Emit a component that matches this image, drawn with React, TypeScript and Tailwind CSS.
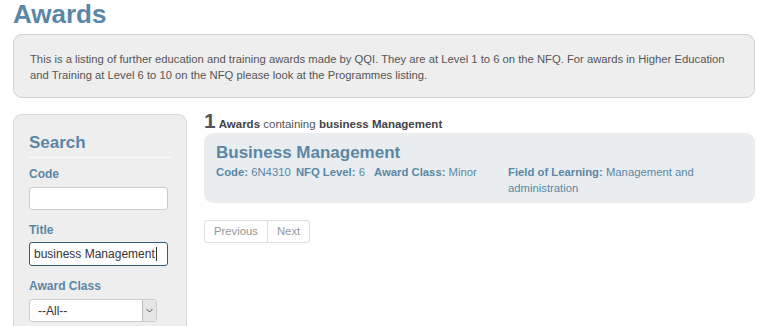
import React from 'react';

const blue = 'text-[#5a87a7]';

export default function App() {
  return (
    <div className="h-[326px] w-[768px] overflow-hidden bg-white px-[13px] font-['Liberation_Sans',Arial,sans-serif] text-[#555]">
      {/* Page title */}
      <h1 className={`text-[26px] font-bold leading-[28px] ${blue}`}>Awards</h1>

      {/* Intro box */}
      <div className="mt-[6px] h-[64px] rounded-[9px] border border-[#d0d0d0] bg-[#eeeeee] px-[16px] pt-[16px] text-[11.25px] leading-[16px] text-[#555]">
        This is a listing of further education and training awards made by QQI. They are at Level 1 to 6 on the NFQ. For awards in Higher Education
        and Training at Level 6 to 10 on the NFQ please look at the Programmes listing.
      </div>

      <div className="mt-[16px] flex gap-[17px]">
        {/* Search sidebar */}
        <aside className="h-[230px] w-[174px] shrink-0 rounded-t-[9px] border border-b-0 border-[#d8d8d8] bg-[#eeeeee] px-[15px] pt-[18px]">
          <h2 className={`pb-[4px] text-[17px] font-bold leading-[20px] ${blue}`}>Search</h2>
          <div className="border-t border-[#fafafa]" />
          <label className={`mt-[9px] block text-[12px] font-bold leading-[14px] ${blue}`}>Code</label>
          <input className="mt-[6px] block h-[23px] w-[139px] rounded-[3px] border border-[#ccc] bg-white" />
          <label className={`mt-[13px] block text-[12px] font-bold leading-[14px] ${blue}`}>Title</label>
          <div className="mt-[5px] flex h-[24px] w-[139px] items-center rounded-[3px] border border-[#2f5e80] bg-white px-[4px] text-[12px] text-[#333]">
            business Management<span className="ml-[1px] h-[14px] w-px bg-[#333]" />
          </div>
          <label className={`mt-[13px] block text-[12px] font-bold leading-[14px] ${blue}`}>Award Class</label>
          <div className="mt-[6px] flex h-[23px] w-[128px] items-center rounded-[3px] border border-[#ccc] bg-white text-[12px] text-[#333]">
            <span className="flex-1 pl-[8px]">--All--</span>
            <span className="flex h-full w-[14px] items-center justify-center border-l border-[#bbb] bg-[#e6e6e6]">
              <svg width="7" height="5" viewBox="0 0 7 5">
                <path d="M0.5 1 L3.5 4 L6.5 1" fill="none" stroke="#555" strokeWidth="1" />
              </svg>
            </span>
          </div>
        </aside>

        {/* Results */}
        <main className="-mt-[3px] flex-1">
          <div className="flex items-baseline gap-[3px] leading-[20px]">
            <span className="text-[21px] font-bold text-[#555]">1</span>
            <span className="text-[11.5px] text-[#444]">
              <b>Awards</b> <span className="text-[#555]">containing</span> <b>business Management</b>
            </span>
          </div>
          <div className="mt-[-1px] h-[70px] rounded-[9px] bg-[#e9edef] px-[12px] pt-[10px]">
            <h3 className={`text-[17px] font-bold leading-[20px] ${blue}`}>Business Management</h3>
            <div className={`mt-[1px] flex text-[11.3px] leading-[16px] ${blue}`}>
              <div className="w-[292px] shrink-0">
                <b>Code:</b> 6N4310 <b className="ml-[2px]">NFQ Level:</b> 6 <b className="ml-[6px]">Award Class:</b> Minor
              </div>
              <div className="w-[200px]">
                <b>Field of Learning:</b> Management and administration
              </div>
            </div>
          </div>

          <div className="mt-[17px] flex h-[23px] w-fit rounded-[3px] border border-[#ddd] text-[11.3px] text-[#999]">
            <span className="flex items-center px-[9px]">Previous</span>
            <span className="flex items-center border-l border-[#ddd] px-[9px]">Next</span>
          </div>
        </main>
      </div>
    </div>
  );
}
